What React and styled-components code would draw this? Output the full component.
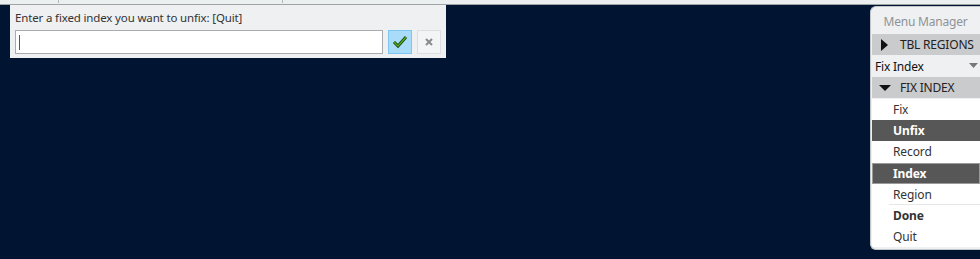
import React from "react";
import styled, { createGlobalStyle } from "styled-components";

const Global = createGlobalStyle`
  html, body { margin: 0; padding: 0; }
  body {
    background: #011431;
    font-family: "Noto Sans", "Open Sans", sans-serif;
    width: 980px;
    height: 259px;
    overflow: hidden;
  }
`;

const Screen = styled.div`
  width: 980px;
  height: 259px;
  display: flex;
  flex-direction: column;
`;

const TopStrip = styled.div`
  height: 4px;
  background: #eceff0;
  border-bottom: 1px solid #9ea3a6;
  display: flex;
  flex-shrink: 0;
`;

const Tick = styled.span`
  width: ${(p) => p.w}px;
  border-right: 1px solid #b5b9bc;
  height: 3px;
`;

const Stage = styled.div`
  flex: 1;
  display: flex;
  justify-content: space-between;
  align-items: flex-start;
`;

const Prompt = styled.div`
  margin-left: 10px;
  width: 436px;
  height: 53px;
  background: #eef0f2;
  box-sizing: border-box;
  padding: 5px 5px 0 5px;
`;

const PromptText = styled.div`
  font-size: 11.5px;
  letter-spacing: -0.15px;
  color: #333;
  height: 20px;
  line-height: 16px;
`;

const PromptRow = styled.div`
  display: flex;
  align-items: center;
  gap: 5px;
`;

const Input = styled.div`
  width: 368px;
  height: 24px;
  box-sizing: border-box;
  background: #fff;
  border: 1px solid #a9acaf;
  display: flex;
  align-items: center;
  padding-left: 3px;
`;

const Caret = styled.span`
  width: 1px;
  height: 15px;
  background: #1a5fc4;
`;

const IconButton = styled.div`
  width: 24px;
  height: 24px;
  box-sizing: border-box;
  display: flex;
  align-items: center;
  justify-content: center;
  background: ${(p) => (p.active ? "#a8dcf8" : "#f3f4f5")};
  border: 1px solid ${(p) => (p.active ? "#7cc6ef" : "#dcdee0")};
`;

const Menu = styled.div`
  margin-top: 1px;
  width: 110px;
  height: 244px;
  box-sizing: border-box;
  background: #eef0f1;
  border: 1px solid #c3c6c9;
  border-right: none;
  border-radius: 6px 0 0 6px;
  padding-top: 4px;
  display: flex;
  flex-direction: column;
  overflow: hidden;
`;

const MenuTitle = styled.div`
  text-align: center;
  font-size: 12px;
  letter-spacing: -0.2px;
  color: #8f9397;
  height: 23px;
  line-height: 21px;
`;

const Section = styled.div`
  height: 21px;
  flex-shrink: 0;
  background: #c9cbcd;
  display: flex;
  align-items: center;
  font-size: 12px;
  letter-spacing: -0.2px;
  color: #222;
  padding-left: 7px;
  gap: 9px;
  margin-left: 1px;
`;

const Select = styled.div`
  height: 22px;
  flex-shrink: 0;
  display: flex;
  align-items: center;
  justify-content: space-between;
  font-size: 12px;
  letter-spacing: -0.2px;
  color: #111;
  padding: 0 2px 0 4px;
`;

const Items = styled.div`
  background: #fff;
  display: flex;
  flex-direction: column;
  margin-left: 1px;
  margin-top: 1px;
`;

const Item = styled.div`
  height: 21.2px;
  flex-shrink: 0;
  box-sizing: border-box;
  display: flex;
  align-items: center;
  font-size: 12px;
  letter-spacing: -0.1px;
  font-weight: ${(p) => (p.bold || p.sel ? 700 : 400)};
  color: ${(p) => (p.sel ? "#fff" : "#333")};
  background: ${(p) => (p.sel ? "#575757" : "#fff")};
  border: ${(p) => (p.focus ? "1px solid #9a9a9a" : "none")};
  padding-left: ${(p) => (p.focus ? 20 : 21)}px;
  position: relative;
  &::after {
    content: "";
    position: absolute;
    left: 17px;
    right: 0;
    bottom: 0;
    border-bottom: 1px solid ${(p) => (p.line ? "#e6e7e8" : "transparent")};
  }
`;

const Tri = ({ dir }) => (
  <svg width="12" height="12" viewBox="0 0 12 12">
    {dir === "right" ? (
      <path d="M2 0 L9 6 L2 12 Z" fill="#111" />
    ) : (
      <path d="M0 3 L12 3 L6 9 Z" fill="#111" />
    )}
  </svg>
);

const items = [
  { label: "Fix" },
  { label: "Unfix", sel: true },
  { label: "Record" },
  { label: "Index", sel: true, focus: true },
  { label: "Region", line: true },
  { label: "Done", bold: true },
  { label: "Quit" },
];

export default function App() {
  return (
    <Screen>
      <Global />
      <TopStrip>
        <Tick w={58} />
        <Tick w={223} />
      </TopStrip>
      <Stage>
        <Prompt>
          <PromptText>Enter a fixed index you want to unfix: [Quit]</PromptText>
          <PromptRow>
            <Input>
              <Caret />
            </Input>
            <IconButton active>
              <svg width="16" height="14" viewBox="0 0 16 14">
                <path d="M2 7 L6 11 L14 2" stroke="#1f3d0c" strokeWidth="3" fill="none" />
                <path d="M2 7 L6 11 L14 2" stroke="#4caf1c" strokeWidth="1.4" fill="none" />
              </svg>
            </IconButton>
            <IconButton>
              <svg width="10" height="10" viewBox="0 0 10 10">
                <path d="M2 2 L8 8 M8 2 L2 8" stroke="#8a8a8a" strokeWidth="2" />
              </svg>
            </IconButton>
          </PromptRow>
        </Prompt>
        <Menu>
          <MenuTitle>Menu Manager</MenuTitle>
          <Section>
            <Tri dir="right" />
            TBL REGIONS
          </Section>
          <Select>
            Fix Index
            <svg width="9" height="6" viewBox="0 0 9 6">
              <path d="M0 0 L9 0 L4.5 5 Z" fill="#777" />
            </svg>
          </Select>
          <Section>
            <Tri dir="down" />
            FIX INDEX
          </Section>
          <Items>
            {items.map((it) => (
              <Item key={it.label} sel={it.sel} focus={it.focus} bold={it.bold} line={it.line}>
                {it.label}
              </Item>
            ))}
          </Items>
        </Menu>
      </Stage>
    </Screen>
  );
}
